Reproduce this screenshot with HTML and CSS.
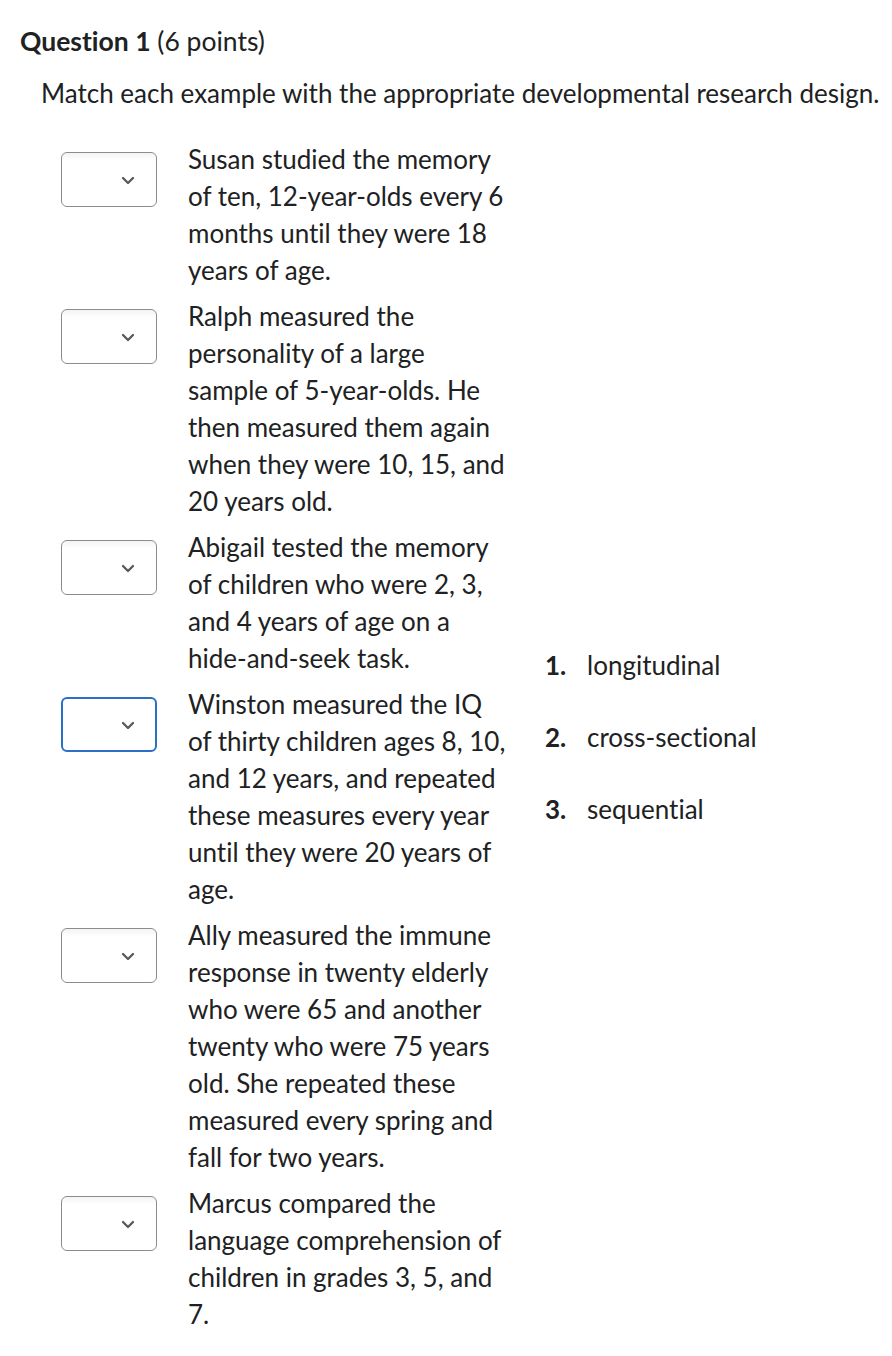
FILE: index.html
```html
<!DOCTYPE html>
<html lang="en">
<head>
<meta charset="utf-8">
<title>Question 1</title>
<link rel="stylesheet" href="styles.css">
</head>
<body>
<div class="question">
  <h2 class="q-title"><strong>Question 1</strong> (6 points)</h2>
  <p class="q-prompt">Match each example with the appropriate developmental research design.</p>
  <div class="match">
    <div class="examples">
      <div class="item">
        <div class="select"><span class="chev"><svg width="14" height="9" viewBox="0 0 14 9"><path d="M2 2 L7 7 L12 2" fill="none" stroke="#565a5c" stroke-width="2.3" stroke-linecap="round" stroke-linejoin="round"/></svg></span></div>
        <div class="text">Susan studied the memory of ten, 12-year-olds every 6 months until they were 18 years of age.</div>
      </div>
      <div class="item">
        <div class="select"><span class="chev"><svg width="14" height="9" viewBox="0 0 14 9"><path d="M2 2 L7 7 L12 2" fill="none" stroke="#565a5c" stroke-width="2.3" stroke-linecap="round" stroke-linejoin="round"/></svg></span></div>
        <div class="text">Ralph measured the personality of a large sample of 5-year-olds. He then measured them again when they were 10, 15, and 20 years old.</div>
      </div>
      <div class="item">
        <div class="select"><span class="chev"><svg width="14" height="9" viewBox="0 0 14 9"><path d="M2 2 L7 7 L12 2" fill="none" stroke="#565a5c" stroke-width="2.3" stroke-linecap="round" stroke-linejoin="round"/></svg></span></div>
        <div class="text">Abigail tested the memory of children who were 2, 3, and 4 years of age on a hide-and-seek task.</div>
      </div>
      <div class="item">
        <div class="select focused"><span class="chev"><svg width="14" height="9" viewBox="0 0 14 9"><path d="M2 2 L7 7 L12 2" fill="none" stroke="#565a5c" stroke-width="2.3" stroke-linecap="round" stroke-linejoin="round"/></svg></span></div>
        <div class="text">Winston measured the IQ of thirty children ages 8, 10, and 12 years, and repeated these measures every year until they were 20 years of age.</div>
      </div>
      <div class="item">
        <div class="select"><span class="chev"><svg width="14" height="9" viewBox="0 0 14 9"><path d="M2 2 L7 7 L12 2" fill="none" stroke="#565a5c" stroke-width="2.3" stroke-linecap="round" stroke-linejoin="round"/></svg></span></div>
        <div class="text">Ally measured the immune response in twenty elderly who were 65 and another twenty who were 75 years old. She repeated these measured every spring and fall for two years.</div>
      </div>
      <div class="item">
        <div class="select"><span class="chev"><svg width="14" height="9" viewBox="0 0 14 9"><path d="M2 2 L7 7 L12 2" fill="none" stroke="#565a5c" stroke-width="2.3" stroke-linecap="round" stroke-linejoin="round"/></svg></span></div>
        <div class="text">Marcus compared the language comprehension of children in grades 3, 5, and 7.</div>
      </div>
    </div>
    <ol class="choices">
      <li><span class="num">1.</span><span>longitudinal</span></li>
      <li><span class="num">2.</span><span>cross-sectional</span></li>
      <li><span class="num">3.</span><span>sequential</span></li>
    </ol>
  </div>
</div>
</body>
</html>
```

FILE: styles.css
```css
html, body {
  margin: 0;
  padding: 0;
  background: #ffffff;
}
body {
  font-family: Lato, "Noto Sans", sans-serif;
  color: #202122;
  font-variant-ligatures: none;
}
.question {
  padding: 25px 0 0 20px;
}
.q-title {
  margin: 0;
  font-size: 26.5px;
  line-height: 32px;
  font-weight: 400;
}
.q-title strong {
  font-weight: 700;
}
.q-prompt {
  margin: 19px 0 0 21px;
  font-size: 26px;
  line-height: 34px;
}
.match {
  display: flex;
  align-items: center;
  margin: 31px 0 0 41px;
}
.examples {
  display: flex;
  flex-direction: column;
  gap: 9px;
  width: 445px;
}
.item {
  display: flex;
  align-items: flex-start;
}
.select {
  box-sizing: border-box;
  width: 96px;
  height: 55px;
  margin-top: 11px;
  border: 1px solid #8a8d8f;
  border-radius: 6px;
  background: linear-gradient(#f4f4f4, #ffffff 8px);
  display: flex;
  align-items: center;
  justify-content: flex-end;
  padding-right: 21px;
  padding-top: 2px;
  flex: none;
}
.select.focused {
  border: 2px solid #2c6fc7;
  background: #ffffff;
  padding-right: 20px;
}
.chev {
  display: flex;
}
.text {
  margin-left: 31px;
  width: 318px;
  font-size: 26px;
  line-height: 37px;
}
.choices {
  list-style: none;
  margin: 0 0 0 39px;
  padding: 0;
  display: flex;
  flex-direction: column;
  gap: 38px;
}
.choices li {
  display: flex;
  font-size: 26px;
  line-height: 34px;
}
.num {
  font-weight: 700;
  width: 42px;
  flex: none;
}
```
